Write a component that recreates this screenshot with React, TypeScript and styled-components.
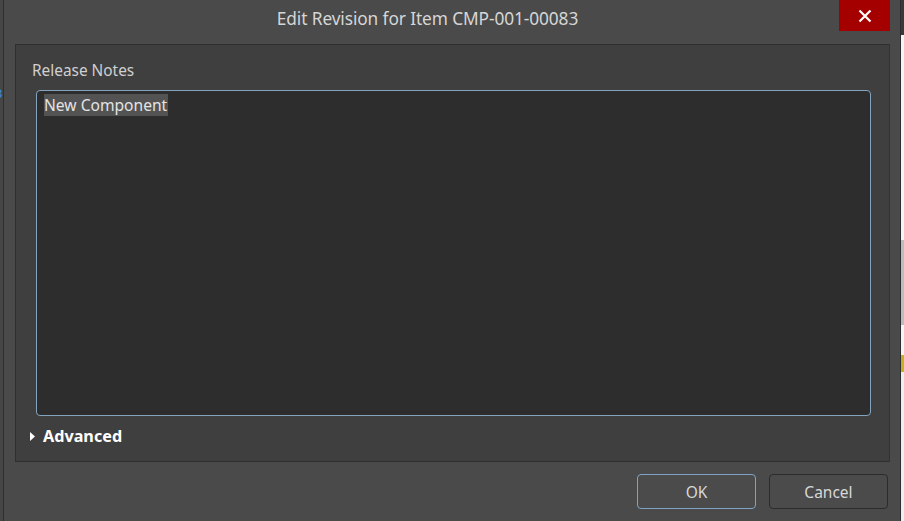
import React from "react";
import styled, { createGlobalStyle } from "styled-components";

const Global = createGlobalStyle`
  html, body { margin: 0; padding: 0; background: #454545; overflow: hidden; }
  #root { width: 904px; height: 521px; }
  * { box-sizing: border-box; }
`;

const Screen = styled.div`
  display: flex;
  width: 904px;
  height: 521px;
  font-family: "Noto Sans", "Open Sans", sans-serif;
`;

const LeftStrip = styled.div`
  width: 3px;
  background: #464646;
  overflow: hidden;
  position: relative;
`;

const BlueGlyph = styled.span`
  position: absolute;
  left: -5px;
  top: 84px;
  color: #3f8fd8;
  font-size: 13px;
  font-family: "Noto Sans", sans-serif;
`;

const RightStrip = styled.div`
  width: 3px;
  display: flex;
  flex-direction: column;
`;

const StripPart = styled.div<{ $h: number; $c: string }>`
  height: ${(p) => p.$h}px;
  background: ${(p) => p.$c};
  flex-shrink: 0;
`;

const Window = styled.div`
  width: 898px;
  height: 521px;
  background: #4a4a4a;
  border-left: 1px solid #2e2e2e;
  border-right: 1px solid #2e2e2e;
  display: flex;
  flex-direction: column;
`;

const TitleBar = styled.div`
  height: 44px;
  display: flex;
  align-items: flex-start;
  flex-shrink: 0;
`;

const Title = styled.div`
  flex: 1;
  text-align: center;
  padding-left: 12px;
  padding-top: 7px;
  color: #d6d6d6;
  font-size: 17.3px;
  letter-spacing: -0.1px;
`;

const CloseButton = styled.div`
  width: 51px;
  height: 31px;
  margin-right: 10px;
  background: #a50000;
  display: flex;
  align-items: center;
  justify-content: center;
`;

const Panel = styled.div`
  margin: 0 10px 0 11px;
  height: 418px;
  background: #3f3f3f;
  border: 1px solid #2f2f2f;
  border-right-color: #333;
  display: flex;
  flex-direction: column;
  padding: 16px 18px 0 16px;
  flex-shrink: 0;
`;

const Label = styled.div`
  color: #d0d0d0;
  font-size: 15.4px;
  height: 29px;
  line-height: 20px;
`;

const NotesBox = styled.div`
  margin-left: 4px;
  height: 326px;
  background: #2d2d2d;
  border: 1px solid #85a3be;
  border-radius: 4px;
  padding: 3px 7px;
`;

const SelectedText = styled.span`
  display: inline-block;
  background: #535353;
  color: #e4e4e4;
  font-size: 15.6px;
  line-height: 22px;
  padding: 0 1px 0 0;
`;

const AdvancedRow = styled.div`
  display: flex;
  align-items: center;
  gap: 7px;
  margin-top: 9px;
  margin-left: -2px;
  color: #ffffff;
  font-weight: 700;
  font-size: 16.2px;
`;

const Footer = styled.div`
  flex: 1;
  display: flex;
  justify-content: flex-end;
  align-items: flex-start;
  gap: 13px;
  padding: 12px 12px 0 0;
`;

const Button = styled.div<{ $primary?: boolean }>`
  width: 119px;
  height: 35px;
  border-radius: 4px;
  background: #4b4b4b;
  border: 1px solid ${(p) => (p.$primary ? "#7fa3c4" : "#2c2c2c")};
  color: #d8d8d8;
  font-size: 15.5px;
  display: flex;
  align-items: center;
  justify-content: center;
`;

export default function App() {
  return (
    <>
      <Global />
      <Screen>
        <LeftStrip>
          <BlueGlyph>3</BlueGlyph>
        </LeftStrip>
        <Window>
          <TitleBar>
            <Title>Edit Revision for Item CMP-001-00083</Title>
            <CloseButton>
              <svg width="14" height="14" viewBox="0 0 14 14">
                <path d="M1.5 1.5 L12.5 12.5 M12.5 1.5 L1.5 12.5" stroke="#fff" strokeWidth="2.2" />
              </svg>
            </CloseButton>
          </TitleBar>
          <Panel>
            <Label>Release Notes</Label>
            <NotesBox>
              <SelectedText>New Component</SelectedText>
            </NotesBox>
            <AdvancedRow>
              <svg width="6" height="9" viewBox="0 0 6 9">
                <path d="M0 0 L5 4.5 L0 9 Z" fill="#ffffff" />
              </svg>
              Advanced
            </AdvancedRow>
          </Panel>
          <Footer>
            <Button $primary>OK</Button>
            <Button>Cancel</Button>
          </Footer>
        </Window>
        <RightStrip>
          <StripPart $h={35} $c="#3a3a3a" />
          <StripPart $h={205} $c="#f4f4f4" />
          <StripPart $h={85} $c="#bdbdbd" />
          <StripPart $h={30} $c="#f4f4f4" />
          <StripPart $h={17} $c="#c8b020" />
          <StripPart $h={149} $c="#eeeeee" />
        </RightStrip>
      </Screen>
    </>
  );
}
